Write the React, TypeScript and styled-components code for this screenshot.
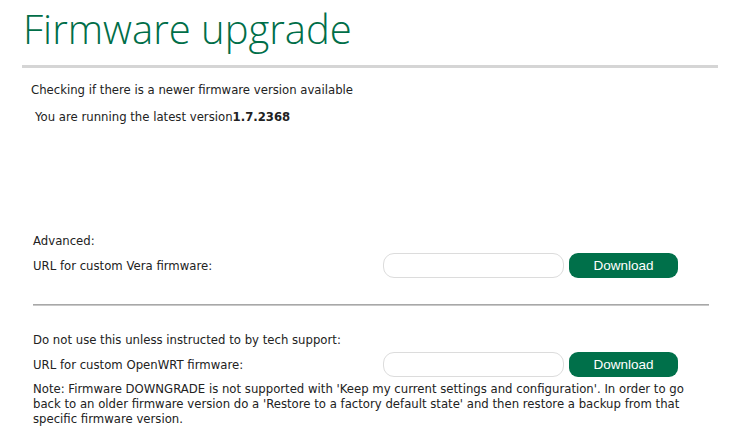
import React from "react";
import styled, { createGlobalStyle } from "styled-components";

const Global = createGlobalStyle`
  html, body { margin: 0; padding: 0; background: #fff; }
  body { font-family: "DejaVu Sans", Tahoma, sans-serif; font-size: 11.7px; color: #222; }
`;

const Page = styled.div`
  width: 730px;
  height: 438px;
  overflow: hidden;
  box-sizing: border-box;
  padding: 0 12px 0 22px;
`;

const Title = styled.h1`
  margin: 0;
  padding: 5px 0 12px 1px;
  font-family: "Open Sans", sans-serif;
  font-weight: 300;
  font-size: 40px;
  line-height: 48px;
  color: #006e48;
  border-bottom: 3px solid #d5d5d5;
`;

const Body = styled.div`
  padding: 0 0 0 9px;
`;

const Line = styled.p<{ $indent?: number; $top?: number }>`
  margin: 0;
  margin-top: ${(p) => p.$top ?? 0}px;
  padding-left: ${(p) => p.$indent ?? 0}px;
  line-height: 16px;
`;

const Version = styled.b`
  font-weight: bold;
`;

const Row = styled.div<{ $top?: number }>`
  display: grid;
  grid-template-columns: 350px 181px 114px;
  align-items: center;
  margin-top: ${(p) => p.$top ?? 0}px;
  padding-left: 2px;
`;

const UrlInput = styled.input`
  box-sizing: border-box;
  width: 181px;
  height: 25px;
  border: 1px solid #dcdcdc;
  border-radius: 11px;
  outline: none;
  padding: 0 8px;
`;

const Button = styled.button`
  margin-left: 5px;
  width: 109px;
  height: 25px;
  border: none;
  border-radius: 9px;
  background: #00704a;
  color: #fff;
  font-family: "Liberation Sans", Arial, sans-serif;
  font-size: 13.5px;
  padding: 0;
`;

const Rule = styled.hr`
  margin: 0;
  margin-top: 26px;
  margin-left: 2px;
  width: 676px;
  border: none;
  border-top: 1px solid #a8a8a8;
  border-bottom: 1px solid #c8c8c8;
`;

const Note = styled.p`
  margin: 5px 0 0 2px;
  width: 672px;
  line-height: 15px;
`;

export default function App() {
  return (
    <Page>
      <Global />
      <Title>Firmware upgrade</Title>
      <Body>
        <Line $top={14}>Checking if there is a newer firmware version available</Line>
        <Line $indent={4} $top={11}>
          You are running the latest version<Version>1.7.2368</Version>
        </Line>
        <Line $indent={2} $top={108}>Advanced:</Line>
        <Row $top={4}>
          <span>URL for custom Vera firmware:</span>
          <UrlInput />
          <Button>Download</Button>
        </Row>
        <Rule />
        <Line $indent={2} $top={26}>Do not use this unless instructed to by tech support:</Line>
        <Row $top={4}>
          <span>URL for custom OpenWRT firmware:</span>
          <UrlInput />
          <Button>Download</Button>
        </Row>
        <Note>
          Note: Firmware DOWNGRADE is not supported with 'Keep my current settings and configuration'. In order to go
          back to an older firmware version do a 'Restore to a factory default state' and then restore a backup from that
          specific firmware version.
        </Note>
      </Body>
    </Page>
  );
}
